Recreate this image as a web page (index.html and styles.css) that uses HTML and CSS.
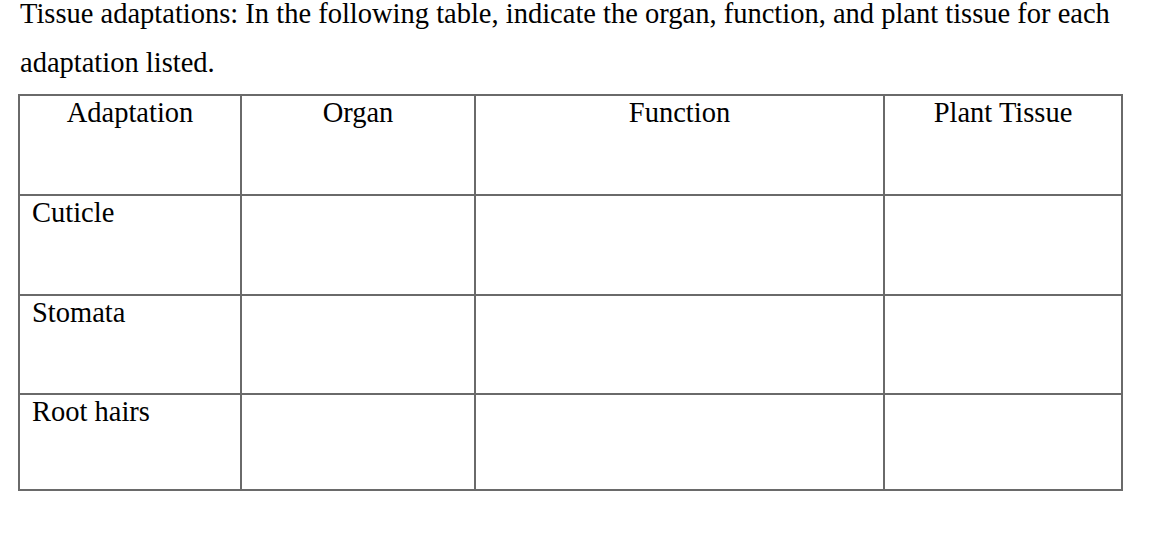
FILE: index.html
```html
<!DOCTYPE html>
<html>
<head>
<meta charset="utf-8">
<link rel="stylesheet" href="styles.css">
</head>
<body>
<p class="intro">Tissue adaptations: In the following table, indicate the organ, function, and plant tissue for each adaptation listed.</p>
<table class="grid">
  <colgroup>
    <col class="c1"><col class="c2"><col class="c3"><col class="c4">
  </colgroup>
  <tr class="head r1">
    <th>Adaptation</th><th>Organ</th><th>Function</th><th>Plant Tissue</th>
  </tr>
  <tr class="r2"><td>Cuticle</td><td></td><td></td><td></td></tr>
  <tr class="r3"><td>Stomata</td><td></td><td></td><td></td></tr>
  <tr class="r4"><td>Root hairs</td><td></td><td></td><td></td></tr>
</table>
</body>
</html>
```
FILE: styles.css
```css
html, body {
  margin: 0;
  padding: 0;
  background: #ffffff;
}
body {
  font-family: "Liberation Serif", "Times New Roman", serif;
  color: #000;
  padding-left: 20px;
  padding-right: 20px;
}
.intro {
  font-size: 28.5px;
  line-height: 49px;
  margin: -11px 0 0 0;
}
.grid {
  border-collapse: collapse;
  margin-top: 7px;
  margin-left: -2px;
  table-layout: fixed;
  width: 1103px;
  font-size: 28.5px;
}
.c1 { width: 222px; }
.c2 { width: 234px; }
.c3 { width: 409px; }
.c4 { width: 238px; }
.grid th, .grid td {
  border: 2px solid #6a6a6a;
  vertical-align: top;
  padding: 2px 12px 0;
  line-height: 30px;
}
.grid th {
  font-weight: normal;
  text-align: center;
}
.grid td {
  text-align: left;
}
.r1 { height: 100px; }
.r2 { height: 100px; }
.r3 { height: 99px; }
.r4 { height: 96px; }
```
